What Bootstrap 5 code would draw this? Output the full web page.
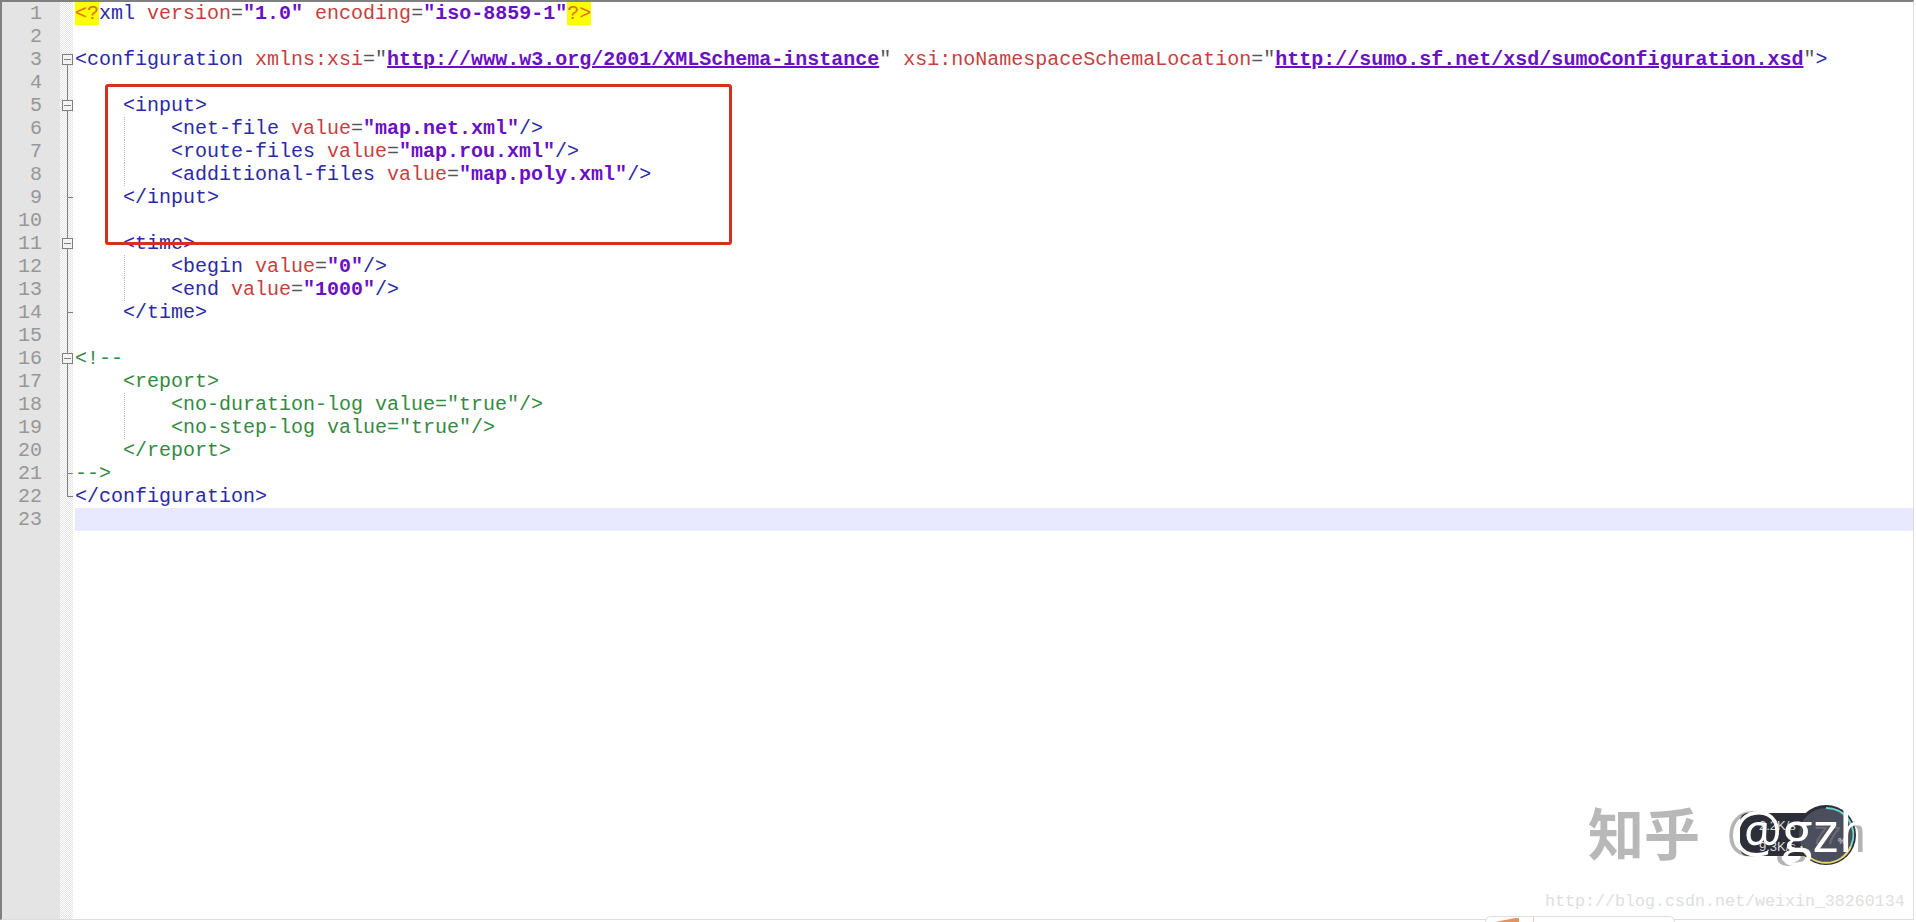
<!DOCTYPE html>
<html lang="en"><head><meta charset="utf-8"><title>sumo config</title>
<link href="https://cdn.jsdelivr.net/npm/bootstrap@5.3.0/dist/css/bootstrap.min.css" rel="stylesheet">
<script src="https://cdn.jsdelivr.net/npm/bootstrap@5.3.0/dist/js/bootstrap.bundle.min.js"></script>
<style>
html,body{height:100%;background:#fff;overflow:hidden}
.editor{height:920px;width:1914px;border-top:2px solid #808080;border-left:2px solid #808080;border-right:1px solid #ddd;border-bottom:1px solid #ddd;position:relative;background:linear-gradient(#e4e4e4,#e4e4e4) 0 0/58px 100% no-repeat #fff}
.editor::before{content:"";position:absolute;left:58px;top:0;bottom:0;width:13px;background-image:repeating-conic-gradient(#e4e4e4 0 25%,#fff 0 50%);background-size:2px 2px}
.code-row{height:23px;font:20px/23px "Liberation Mono","Courier New",monospace;white-space:pre;position:relative}
.ln{width:58px;height:23px;padding-right:18px;text-align:right;color:#979797;flex:none}
.fm{width:15px;height:23px;flex:none;position:relative}
.fm.rail::before{content:"";position:absolute;left:7px;top:0;bottom:0;width:1px;background:#808080}
.fm.half::before{bottom:11px}
.fm.end::after{content:"";position:absolute;left:7px;top:11px;width:6px;height:1px;background:#808080}
.fm.box::after{content:"";position:absolute;left:2px;top:6px;width:11px;height:11px;border:1px solid #808080;background:linear-gradient(#808080,#808080) center/7px 1px no-repeat #f4f4f4}
.fm.box.st::before{content:"";position:absolute;left:7px;top:16px;bottom:0;width:1px;background:#808080}
.tx{flex:1;position:relative;color:#000}
.t{color:#2a2aa6}.a{color:#c53f3f}.e{color:#555}
.q{color:#6a10c4;font-weight:700}.u{text-decoration:underline}
.pi{background:#ffff00;color:#d9730d}
.cm{color:#358a42}
.guide{display:inline-block;width:48px;position:relative;height:23px;vertical-align:top}
.guide.g::before{content:"";position:absolute;left:1px;top:0;bottom:0;border-left:1px dotted #bbb}
.cur{background:#e8e8ff}
.redbox{position:absolute;left:105px;top:84px;width:627px;height:161px;border:3px solid #d7301f;border-radius:3px}
.wm-cn{position:absolute;left:1588px;top:799px;font:700 56px/64px "Noto Sans CJK SC",sans-serif;color:#b8b8b8}
.wm-gray,.wm-white{position:absolute;top:795px;font:400 56px/70px "Open Sans",sans-serif}
.wm-gray{left:1726px;color:#b4b4b4}
.wm-white{left:1732px;color:#fff}
.net-pill{position:absolute;left:1740px;top:813px;width:80px;height:43px;background:#2c2f38;border-radius:8px 0 0 8px;color:#ddd;font:13px/21px "Liberation Sans",sans-serif;padding:2px 0 0 19px}
.net-dial{position:absolute;left:1795px;top:804px;width:62px;height:62px}
.url-wm{position:absolute;left:1545px;top:892px;font:16.67px/20px "Liberation Mono",monospace;color:#dedede}
.tab-bit{position:absolute;left:1485px;top:916px;width:190px;height:8px;border:1px solid #ddd;border-radius:6px 6px 0 0;background:#fff}
.tab-ic{position:absolute;left:1495px;top:918px;width:26px;height:4px}
.tab-rule{position:absolute;left:1533px;top:917px;width:1px;height:5px;background:#f2c9c0}
</style></head><body>
<div class="editor">
<div class="code-row d-flex"><span class="ln">1</span><span class="fm"></span><span class="tx"><span class="pi">&lt;?</span><span class="t">xml</span> <span class="a">version</span><span class="e">=</span><span class="q">"1.0"</span> <span class="a">encoding</span><span class="e">=</span><span class="q">"iso-8859-1"</span><span class="pi">?&gt;</span></span></div>
<div class="code-row d-flex"><span class="ln">2</span><span class="fm"></span><span class="tx"></span></div>
<div class="code-row d-flex"><span class="ln">3</span><span class="fm box st"></span><span class="tx"><span class="t">&lt;configuration</span> <span class="a">xmlns:xsi</span><span class="e">=</span><span class="e">"</span><span class="q u">http://www.w3.org/2001/XMLSchema-instance</span><span class="e">"</span> <span class="a">xsi:noNamespaceSchemaLocation</span><span class="e">=</span><span class="e">"</span><span class="q u">http://sumo.sf.net/xsd/sumoConfiguration.xsd</span><span class="e">"</span><span class="t">&gt;</span></span></div>
<div class="code-row d-flex"><span class="ln">4</span><span class="fm rail"></span><span class="tx"></span></div>
<div class="code-row d-flex"><span class="ln">5</span><span class="fm rail box"></span><span class="tx">    <span class="t">&lt;input&gt;</span></span></div>
<div class="code-row d-flex"><span class="ln">6</span><span class="fm rail"></span><span class="tx"><span class="guide"></span><span class="guide g"></span><span class="t">&lt;net-file</span> <span class="a">value</span><span class="e">=</span><span class="q">"map.net.xml"</span><span class="t">/&gt;</span></span></div>
<div class="code-row d-flex"><span class="ln">7</span><span class="fm rail"></span><span class="tx"><span class="guide"></span><span class="guide g"></span><span class="t">&lt;route-files</span> <span class="a">value</span><span class="e">=</span><span class="q">"map.rou.xml"</span><span class="t">/&gt;</span></span></div>
<div class="code-row d-flex"><span class="ln">8</span><span class="fm rail"></span><span class="tx"><span class="guide"></span><span class="guide g"></span><span class="t">&lt;additional-files</span> <span class="a">value</span><span class="e">=</span><span class="q">"map.poly.xml"</span><span class="t">/&gt;</span></span></div>
<div class="code-row d-flex"><span class="ln">9</span><span class="fm rail end"></span><span class="tx">    <span class="t">&lt;/input&gt;</span></span></div>
<div class="code-row d-flex"><span class="ln">10</span><span class="fm rail"></span><span class="tx"></span></div>
<div class="code-row d-flex"><span class="ln">11</span><span class="fm rail box"></span><span class="tx">    <span class="t">&lt;time&gt;</span></span></div>
<div class="code-row d-flex"><span class="ln">12</span><span class="fm rail"></span><span class="tx"><span class="guide"></span><span class="guide g"></span><span class="t">&lt;begin</span> <span class="a">value</span><span class="e">=</span><span class="q">"0"</span><span class="t">/&gt;</span></span></div>
<div class="code-row d-flex"><span class="ln">13</span><span class="fm rail"></span><span class="tx"><span class="guide"></span><span class="guide g"></span><span class="t">&lt;end</span> <span class="a">value</span><span class="e">=</span><span class="q">"1000"</span><span class="t">/&gt;</span></span></div>
<div class="code-row d-flex"><span class="ln">14</span><span class="fm rail end"></span><span class="tx">    <span class="t">&lt;/time&gt;</span></span></div>
<div class="code-row d-flex"><span class="ln">15</span><span class="fm rail"></span><span class="tx"></span></div>
<div class="code-row d-flex"><span class="ln">16</span><span class="fm rail box"></span><span class="tx cm">&lt;!--</span></div>
<div class="code-row d-flex"><span class="ln">17</span><span class="fm rail"></span><span class="tx cm">    &lt;report&gt;</span></div>
<div class="code-row d-flex"><span class="ln">18</span><span class="fm rail"></span><span class="tx cm"><span class="guide"></span><span class="guide g"></span>&lt;no-duration-log value="true"/&gt;</span></div>
<div class="code-row d-flex"><span class="ln">19</span><span class="fm rail"></span><span class="tx cm"><span class="guide"></span><span class="guide g"></span>&lt;no-step-log value="true"/&gt;</span></div>
<div class="code-row d-flex"><span class="ln">20</span><span class="fm rail"></span><span class="tx cm">    &lt;/report&gt;</span></div>
<div class="code-row d-flex"><span class="ln">21</span><span class="fm rail end"></span><span class="tx cm">--&gt;</span></div>
<div class="code-row d-flex"><span class="ln">22</span><span class="fm rail half end"></span><span class="tx"><span class="t">&lt;/configuration&gt;</span></span></div>
<div class="code-row d-flex"><span class="ln">23</span><span class="fm"></span><span class="tx cur"></span></div>
</div>
<div class="redbox"></div>
<div class="wm-cn">知乎</div>
<div class="wm-gray">@gzh</div>
<div class="net-pill">2.2K/s<br>9.3K/s</div>
<svg class="net-dial" viewBox="0 0 62 62"><circle cx="31" cy="31" r="30" fill="#2c2f38"/><circle cx="31" cy="31" r="27" fill="#4b4e5c"/><path d="M31 4A27 27 0 0 1 56 42" fill="none" stroke="#6fd3cc" stroke-width="2"/><path d="M56 42A27 27 0 0 1 6 42" fill="none" stroke="#e6d77a" stroke-width="2"/><text x="31" y="40" text-anchor="middle" font-family="Liberation Sans" font-size="24" font-style="italic" fill="#6a6d78">77</text><text x="43" y="40" font-family="Liberation Sans" font-size="9" fill="#eee">%</text></svg>
<div class="wm-white">@gzh</div>
<div class="url-wm">http://blog.csdn.net/weixin_38260134</div>
<div class="tab-bit"></div>
<svg class="tab-ic" viewBox="0 0 26 4"><path d="M0 4L20 0L24 0L24 4Z" fill="#e8935e"/></svg>
<div class="tab-rule"></div>
</body></html>
